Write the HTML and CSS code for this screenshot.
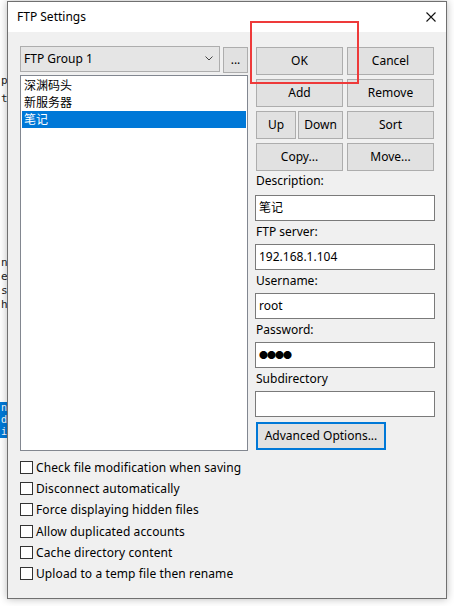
FILE: index.html
```html
<!DOCTYPE html>
<html lang="en">
<head>
    <meta charset="UTF-8">
    <title>FTP Settings</title>
    <link rel="stylesheet" href="styles.css">
</head>
<body>
    <div class="screen">
        <!-- editor behind the dialog, only its right edge shows -->
        <div class="editor">
            <div class="ln l-p">p</div>
            <div class="ln l-t">t</div>
            <div class="ln l-n">n</div>
            <div class="ln">e</div>
            <div class="ln">s</div>
            <div class="ln">h</div>
            <div class="sel">
                <div class="ln">n</div>
                <div class="ln">d</div>
                <div class="ln">i</div>
            </div>
        </div>

        <div class="dialog">
            <div class="titlebar">
                <span class="title">FTP Settings</span>
                <svg class="close" width="10" height="10" viewBox="0 0 10 10">
                    <path d="M0.5 0.5 L9.5 9.5 M9.5 0.5 L0.5 9.5" stroke="#111" stroke-width="1.1" fill="none"/>
                </svg>
            </div>

            <div class="content">
                <div class="main">
                    <div class="left">
                        <div class="group-row">
                            <div class="combo">
                                <span>FTP Group 1</span>
                                <svg width="8" height="5" viewBox="0 0 8 5">
                                    <path d="M0.5 0.5 L4 4 L7.5 0.5" stroke="#444" stroke-width="1" fill="none"/>
                                </svg>
                            </div>
                            <button class="btn dots">...</button>
                        </div>
                        <ul class="sites">
                            <li>深渊码头</li>
                            <li>新服务器</li>
                            <li class="selected">笔记</li>
                        </ul>
                    </div>

                    <div class="right">
                        <div class="btn-grid">
                            <button class="btn">OK</button>
                            <button class="btn">Cancel</button>
                            <button class="btn">Add</button>
                            <button class="btn">Remove</button>
                            <div class="updown">
                                <button class="btn up">Up</button>
                                <button class="btn down">Down</button>
                            </div>
                            <button class="btn">Sort</button>
                            <button class="btn">Copy...</button>
                            <button class="btn">Move...</button>
                        </div>

                        <label class="field-label first">Description:</label>
                        <div class="input">笔记</div>
                        <label class="field-label">FTP server:</label>
                        <div class="input">192.168.1.104</div>
                        <label class="field-label">Username:</label>
                        <div class="input">root</div>
                        <label class="field-label">Password:</label>
                        <div class="input password">●●●●</div>
                        <label class="field-label">Subdirectory</label>
                        <div class="input"></div>

                        <button class="btn advanced">Advanced Options...</button>
                    </div>
                </div>

                <div class="options">
                    <div class="check"><span class="box"></span>Check file modification when saving</div>
                    <div class="check"><span class="box"></span>Disconnect automatically</div>
                    <div class="check"><span class="box"></span>Force displaying hidden files</div>
                    <div class="check"><span class="box"></span>Allow duplicated accounts</div>
                    <div class="check"><span class="box"></span>Cache directory content</div>
                    <div class="check"><span class="box"></span>Upload to a temp file then rename</div>
                </div>
            </div>

            <div class="marker"></div>
        </div>
    </div>
</body>
</html>
```

FILE: styles.css
```css
body {
    margin: 0;
    background: #fff;
    overflow: hidden;
    font-family: "Noto Sans", "Noto Sans CJK SC", sans-serif;
    font-size: 12px;
    color: #000;
}
.screen {
    display: flex;
    width: 454px;
    height: 606px;
}

/* editor strip */
.editor {
    width: 7px;
    overflow: hidden;
    font-family: "DejaVu Sans Mono", monospace;
    font-size: 11px;
    color: #222;
    flex-shrink: 0;
}
.ln {
    height: 14px;
    line-height: 14px;
    padding-left: 1px;
}
.l-p { margin-top: 74px; }
.l-t { margin-top: 4px; }
.l-n { margin-top: 150px; }
.sel {
    margin-top: 90px;
    background: #0078d7;
    color: #fff;
}
.sel .ln {
    height: 12px;
    line-height: 12px;
    font-size: 10px;
}

/* dialog window */
.dialog {
    position: relative;
    width: 440px;
    height: 598px;
    margin-top: 1px;
    box-sizing: border-box;
    border: 1px solid #707070;
    background: #f0f0f0;
    box-shadow: 0 0 8px rgba(0, 0, 0, 0.28);
    display: flex;
    flex-direction: column;
}
.titlebar {
    height: 30px;
    background: #fff;
    display: flex;
    align-items: center;
    justify-content: space-between;
    padding: 0 9px 0 9px;
    flex-shrink: 0;
}
.title {
    font-size: 12px;
    padding-bottom: 1px;
}
.close {
    margin-right: 1px;
    margin-bottom: 1px;
}
.content {
    padding: 14px 10px 0 12px;
}
.main {
    display: flex;
    gap: 7px;
}

/* left: group selector and site list */
.left {
    width: 228px;
}
.group-row {
    display: flex;
    gap: 3px;
}
.combo {
    width: 200px;
    height: 26px;
    box-sizing: border-box;
    border: 1px solid #adadad;
    background: #e5e5e5;
    display: flex;
    align-items: center;
    justify-content: space-between;
    padding: 0 6px 1px 3px;
}
.combo span {
    font-size: 12px;
}
.btn {
    font-family: inherit;
    font-size: 12px;
    color: #000;
    background: #e1e1e1;
    border: 1px solid #adadad;
    box-sizing: border-box;
    height: 28px;
    padding: 0 0 1px 0;
    margin: 0;
}
.dots {
    width: 25px;
    height: 26px;
    margin-top: 1px;
    line-height: 18px;
}
.sites {
    list-style: none;
    margin: 2px 0 0 0;
    padding: 1px;
    height: 376px;
    box-sizing: border-box;
    border: 1px solid #828790;
    background: #fff;
}
.sites li {
    height: 17px;
    line-height: 17px;
    padding-left: 2px;
}
.sites .selected {
    background: #0078d7;
    color: #fff;
}

/* right: action buttons and connection fields */
.right {
    width: 180px;
    display: flex;
    flex-direction: column;
}
.btn-grid {
    display: grid;
    grid-template-columns: 87px 87px;
    grid-auto-rows: 28px;
    gap: 4px;
    padding: 0 1px;
    margin-top: 1px;
}
.updown {
    display: flex;
    gap: 2px;
}
.up { width: 40px; }
.down { width: 45px; }
.field-label {
    display: block;
    height: 23px;
    line-height: 21px;
    padding-left: 1px;
}
.field-label.first {
    height: 24px;
    line-height: 20px;
}
.input {
    height: 26px;
    box-sizing: border-box;
    border: 1px solid #7a7a7a;
    background: #fff;
    padding-left: 3px;
    line-height: 23px;
}
.password {
    font-size: 9px;
    letter-spacing: -1px;
}
.advanced {
    width: 130px;
    margin: 5px 0 0 1px;
    border: 2px solid #0078d7;
}

/* option checkboxes */
.options {
    margin-top: 6px;
}
.check {
    height: 21.2px;
    display: flex;
    align-items: center;
    gap: 3px;
    letter-spacing: 0.1px;
}
.box {
    width: 13px;
    height: 13px;
    box-sizing: border-box;
    border: 1px solid #333;
    background: #fff;
}

/* red highlight frame around the confirm button */
.marker {
    position: absolute;
    left: 242px;
    top: 19px;
    width: 109px;
    height: 63px;
    box-sizing: border-box;
    border: 2px solid #ee3a3a;
}
```
